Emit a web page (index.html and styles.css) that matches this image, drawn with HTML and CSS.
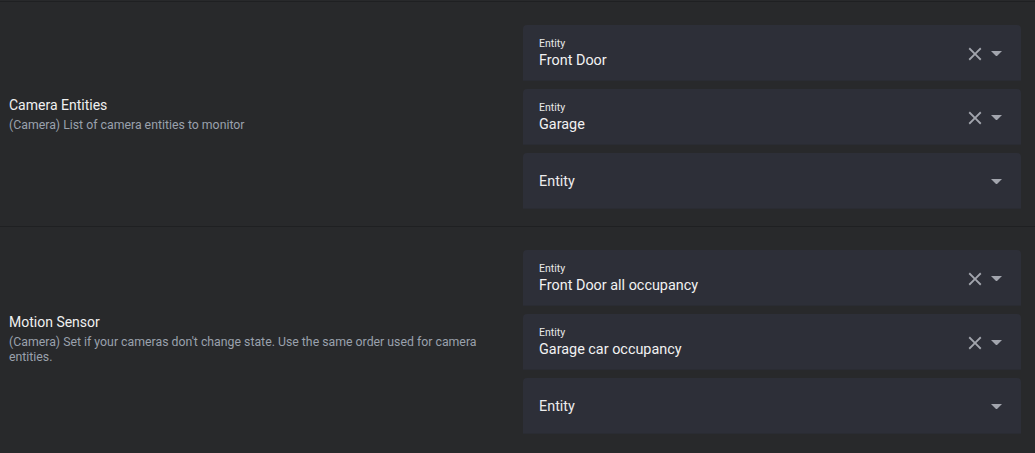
FILE: index.html
```html
<!DOCTYPE html>
<html>
<head>
<meta charset="utf-8">
<link rel="stylesheet" href="styles.css">
</head>
<body>
<div class="page">
  <section class="row">
    <div class="info">
      <div class="title">Camera Entities</div>
      <div class="desc">(Camera) List of camera entities to monitor</div>
    </div>
    <div class="fields">
      <div class="field">
        <div class="text"><div class="label">Entity</div><div class="value">Front Door</div></div>
        <div class="icons">
          <svg class="clear" viewBox="0 0 24 24"><path d="M19 6.41L17.59 5 12 10.59 6.41 5 5 6.41 10.59 12 5 17.59 6.41 19 12 13.41 17.59 19 19 17.59 13.41 12z"/></svg>
          <svg class="arrow" viewBox="0 0 10 5"><path d="M0 0h10L5 5z"/></svg>
        </div>
      </div>
      <div class="field">
        <div class="text"><div class="label">Entity</div><div class="value">Garage</div></div>
        <div class="icons">
          <svg class="clear" viewBox="0 0 24 24"><path d="M19 6.41L17.59 5 12 10.59 6.41 5 5 6.41 10.59 12 5 17.59 6.41 19 12 13.41 17.59 19 19 17.59 13.41 12z"/></svg>
          <svg class="arrow" viewBox="0 0 10 5"><path d="M0 0h10L5 5z"/></svg>
        </div>
      </div>
      <div class="field">
        <div class="text"><div class="placeholder">Entity</div></div>
        <div class="icons">
          <svg class="arrow" viewBox="0 0 10 5"><path d="M0 0h10L5 5z"/></svg>
        </div>
      </div>
    </div>
  </section>
  <section class="row">
    <div class="info">
      <div class="title">Motion Sensor</div>
      <div class="desc">(Camera) Set if your cameras don't change state. Use the same order used for camera entities.</div>
    </div>
    <div class="fields">
      <div class="field">
        <div class="text"><div class="label">Entity</div><div class="value">Front Door all occupancy</div></div>
        <div class="icons">
          <svg class="clear" viewBox="0 0 24 24"><path d="M19 6.41L17.59 5 12 10.59 6.41 5 5 6.41 10.59 12 5 17.59 6.41 19 12 13.41 17.59 19 19 17.59 13.41 12z"/></svg>
          <svg class="arrow" viewBox="0 0 10 5"><path d="M0 0h10L5 5z"/></svg>
        </div>
      </div>
      <div class="field">
        <div class="text"><div class="label">Entity</div><div class="value">Garage car occupancy</div></div>
        <div class="icons">
          <svg class="clear" viewBox="0 0 24 24"><path d="M19 6.41L17.59 5 12 10.59 6.41 5 5 6.41 10.59 12 5 17.59 6.41 19 12 13.41 17.59 19 19 17.59 13.41 12z"/></svg>
          <svg class="arrow" viewBox="0 0 10 5"><path d="M0 0h10L5 5z"/></svg>
        </div>
      </div>
      <div class="field">
        <div class="text"><div class="placeholder">Entity</div></div>
        <div class="icons">
          <svg class="arrow" viewBox="0 0 10 5"><path d="M0 0h10L5 5z"/></svg>
        </div>
      </div>
    </div>
  </section>
</div>
</body>
</html>
```
FILE: styles.css
```css
html, body {
  margin: 0;
  padding: 0;
  background: #28292b;
  font-family: Roboto, "Noto Sans", sans-serif;
  color: #e1e1e1;
}
.page {
  padding-top: 1px;
  height: 452px;
  overflow: hidden;
}
.row {
  display: flex;
  align-items: center;
  border-top: 1px solid #1f2022;
  padding: 23px 14px 17px 9px;
}
.info {
  flex: 1;
  min-width: 0;
  padding-right: 14px;
  padding-bottom: 7px;
}
.title {
  font-size: 14px;
  line-height: 20px;
  color: #f0f0f0;
}
.desc {
  font-size: 12.3px;
  line-height: 15px;
  color: #9aa1ad;
  margin-top: 3px;
}
.fields {
  width: 498px;
  display: flex;
  flex-direction: column;
  gap: 8px;
}
.field {
  height: 56px;
  box-sizing: border-box;
  background: #2d2f38;
  border-radius: 4px 4px 0 0;
  border-bottom: 1px solid #2a2c33;
  display: flex;
  align-items: center;
  padding: 2px 16px 0;
}
.text {
  flex: 1;
  min-width: 0;
}
.label {
  font-size: 10.5px;
  line-height: 12px;
  color: #e8e8e8;
}
.value {
  font-size: 14.4px;
  line-height: 19px;
  color: #f2f2f2;
  margin-top: 1px;
}
.placeholder {
  font-size: 14.4px;
  line-height: 20px;
  color: #ececec;
}
.icons {
  display: flex;
  align-items: center;
  gap: 5px;
  margin-right: 3px;
}
.clear {
  width: 22px;
  height: 22px;
  fill: #a2a5ad;
}
.arrow {
  width: 11px;
  height: 5.5px;
  fill: #a2a5ad;
}
```
